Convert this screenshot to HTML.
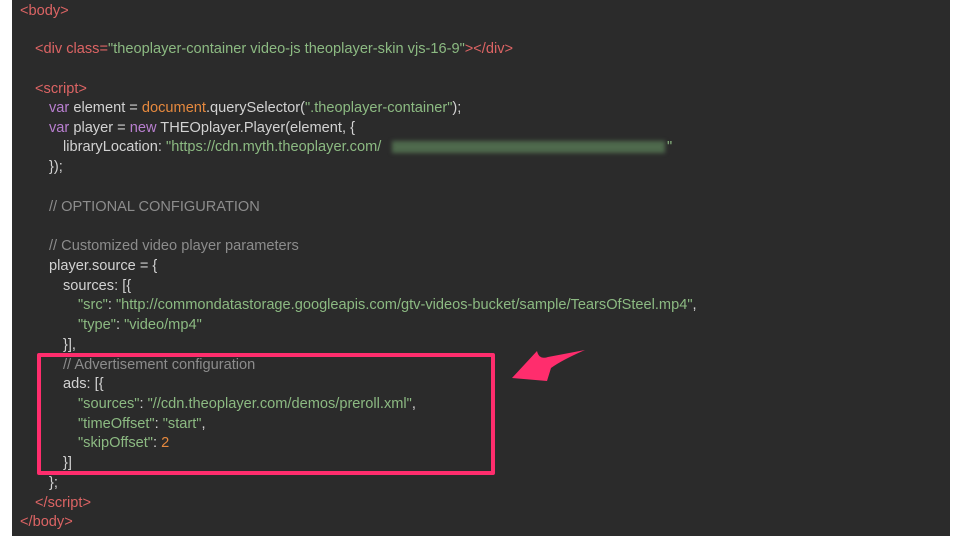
<!DOCTYPE html>
<html><head><meta charset="utf-8"><style>
html,body{margin:0;padding:0;background:#fff;width:960px;height:536px;overflow:hidden}
#p{position:absolute;left:12px;top:0;width:938px;height:536px;background:#2b2b2b}
.l{position:absolute;left:0;height:20px;line-height:20px;white-space:pre;font-family:"Liberation Sans",sans-serif;font-size:14.6px;color:#d2d2d2}
.t{color:#dc6464}.s{color:#8cba82}.k{color:#b87fcf}.o{color:#e6893e}.c{color:#8c8c8c}
</style></head><body>
<div id="p"></div>
<div class="l t" style="top:1px;left:20px">&lt;body&gt;</div>
<div class="l" style="top:39px;left:35px"><span class="t">&lt;div class=</span><span class="s">"theoplayer-container video-js theoplayer-skin vjs-16-9"</span><span class="t">&gt;&lt;/div&gt;</span></div>
<div class="l t" style="top:79px;left:35px">&lt;script&gt;</div>
<div class="l" style="top:98px;left:49px"><span class="k">var</span> element = <span class="o">document</span>.querySelector(<span class="s">".theoplayer-container"</span>);</div>
<div class="l" style="top:118px;left:49px"><span class="k">var</span> player = <span class="k">new</span> THEOplayer.Player(element, {</div>
<div class="l" style="top:137px;left:63px">libraryLocation: <span class="s">"https://cdn.myth.theoplayer.com/</span></div>
<div style="position:absolute;left:392px;top:141px;width:273px;height:12px;background:#4f6a4d;filter:blur(2px)"></div>
<div class="l s" style="top:137px;left:667px">"</div>
<div class="l" style="top:157px;left:49px">});</div>
<div class="l c" style="top:197px;left:49px">// OPTIONAL CONFIGURATION</div>
<div class="l c" style="top:236px;left:49px">// Customized video player parameters</div>
<div class="l" style="top:256px;left:49px">player.source = {</div>
<div class="l" style="top:276px;left:63px">sources: [{</div>
<div class="l" style="top:295px;left:78px"><span class="s">"src"</span>: <span class="s">"http://commondatastorage.googleapis.com/gtv-videos-bucket/sample/TearsOfSteel.mp4"</span>,</div>
<div class="l" style="top:315px;left:78px"><span class="s">"type"</span>: <span class="s">"video/mp4"</span></div>
<div class="l" style="top:335px;left:63px">}],</div>
<div class="l c" style="top:355px;left:63px">// Advertisement configuration</div>
<div class="l" style="top:374px;left:63px">ads: [{</div>
<div class="l" style="top:394px;left:78px"><span class="s">"sources"</span>: <span class="s">"//cdn.theoplayer.com/demos/preroll.xml"</span>,</div>
<div class="l" style="top:414px;left:78px"><span class="s">"timeOffset"</span>: <span class="s">"start"</span>,</div>
<div class="l" style="top:433px;left:78px"><span class="s">"skipOffset"</span>: <span class="o">2</span></div>
<div class="l" style="top:453px;left:63px">}]</div>
<div class="l" style="top:473px;left:49px">};</div>
<div class="l t" style="top:493px;left:35px">&lt;/script&gt;</div>
<div class="l t" style="top:512px;left:20px">&lt;/body&gt;</div>
<div style="position:absolute;left:37px;top:353px;width:450px;height:114px;border:4px solid #ff2d6d;border-radius:2px"></div>
<svg style="position:absolute;left:0;top:0" width="960" height="536"><path d="M512 378 L537 351 Q539 360 548 357 L585 350 Q562 360 551 368 L547 381 Z" fill="#ff2d6d"/></svg>
</body></html>
